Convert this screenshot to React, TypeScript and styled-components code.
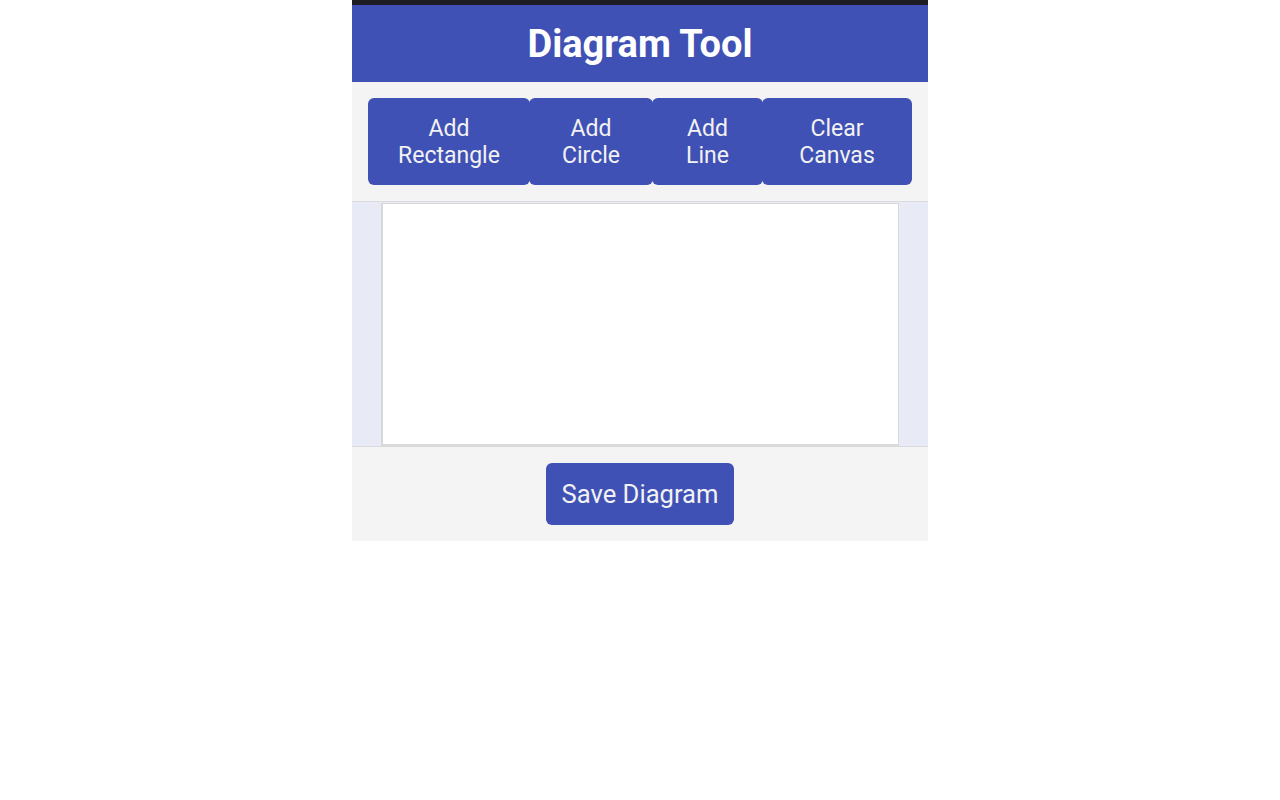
import React from "react";
import styled, { createGlobalStyle } from "styled-components";

const GlobalStyle = createGlobalStyle`
  html, body {
    margin: 0;
    padding: 0;
    background: #ffffff;
    font-family: Roboto, "Noto Sans", Arial, sans-serif;
  }
  * { box-sizing: border-box; }
`;

const Shell = styled.div`
  width: 576px;
  margin: 0 auto;
  display: flex;
  flex-direction: column;
  border-top: 5px solid #1d1c22;
`;

const Header = styled.header`
  height: 77px;
  background: #3f51b5;
  display: flex;
  align-items: center;
  justify-content: center;
`;

const Title = styled.h1`
  margin: 0;
  color: #ffffff;
  font-size: 38px;
  font-weight: 700;
  line-height: 1;
`;

const Toolbar = styled.div`
  background: #f4f4f4;
  padding: 16px;
  display: flex;
  justify-content: center;
`;

const ToolButton = styled.button<{ $w: number }>`
  flex: 0 0 ${(p) => p.$w}px;
  height: 87px;
  margin: 0 -0.5px;
  border: none;
  border-radius: 6px;
  background: #3f51b5;
  color: #f2f2f2;
  font-family: Roboto, Arial, sans-serif;
  font-size: 23px;
  line-height: 27px;
  padding: 0 16px;
  cursor: pointer;
`;

const Stage = styled.section`
  background: #e8eaf6;
  border-top: 1px solid #dadada;
  border-bottom: 1px solid #dadada;
  display: flex;
  justify-content: center;
  padding: 1px 0 0;
`;

const Canvas = styled.div`
  width: 518px;
  height: 243px;
  background: #ffffff;
  border: 2px solid #d9d9d9;
  border-top-width: 1px;
  border-right-width: 1px;
`;

const Footer = styled.footer`
  background: #f4f4f4;
  padding: 16px 0;
  display: flex;
  justify-content: center;
`;

const SaveButton = styled.button`
  height: 62px;
  padding: 0 16px;
  border: none;
  border-radius: 6px;
  background: #3f51b5;
  color: #f2f2f2;
  font-family: Roboto, Arial, sans-serif;
  font-size: 25.6px;
  cursor: pointer;
`;

const tools = [
  { label: "Add Rectangle", w: 162 },
  { label: "Add Circle", w: 124 },
  { label: "Add Line", w: 111 },
  { label: "Clear Canvas", w: 150 },
];

export default function App() {
  return (
    <>
      <GlobalStyle />
      <Shell>
        <Header>
          <Title>Diagram Tool</Title>
        </Header>
        <Toolbar>
          {tools.map((t) => (
            <ToolButton key={t.label} $w={t.w}>
              {t.label}
            </ToolButton>
          ))}
        </Toolbar>
        <Stage>
          <Canvas />
        </Stage>
        <Footer>
          <SaveButton>Save Diagram</SaveButton>
        </Footer>
      </Shell>
    </>
  );
}
